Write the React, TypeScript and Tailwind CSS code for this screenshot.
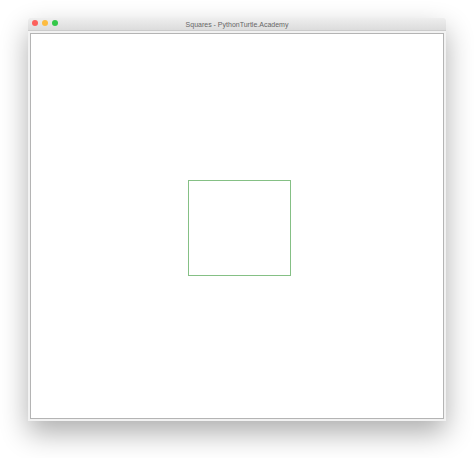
export default function App() {
  return (
    <div className="w-[474px] h-[458px] bg-white pt-[18px] pl-[28px]" style={{ fontFamily: '"Liberation Sans", Arial, sans-serif' }}>
      <div className="w-[418px] h-[403px] flex flex-col bg-[#ececec] rounded-t-[4px] shadow-[0_12px_28px_rgba(0,0,0,0.32)]">
        <div className="relative h-[13px] flex items-center justify-center rounded-t-[4px] bg-gradient-to-b from-[#eeeeee] to-[#dcdcdc] border-b border-[#cccccc]">
          <div className="absolute left-[4px] top-[2px] flex gap-[4px]">
            <div className="w-[6px] h-[6px] rounded-full bg-[#fc605c]" />
            <div className="w-[6px] h-[6px] rounded-full bg-[#fdbc40]" />
            <div className="w-[6px] h-[6px] rounded-full bg-[#34c84a]" />
          </div>
          <span className="text-[7px] leading-none text-[#666]">Squares - PythonTurtle.Academy</span>
        </div>
        <div className="flex-1 p-[2px] bg-[#f2f2f2]">
          <div className="w-full h-full border border-[#b4b4b4] bg-white flex items-center justify-center pl-[4px] pt-[4px]">
            <div className="w-[103px] h-[96px] border border-[#85c085]" />
          </div>
        </div>
      </div>
    </div>
  );
}
